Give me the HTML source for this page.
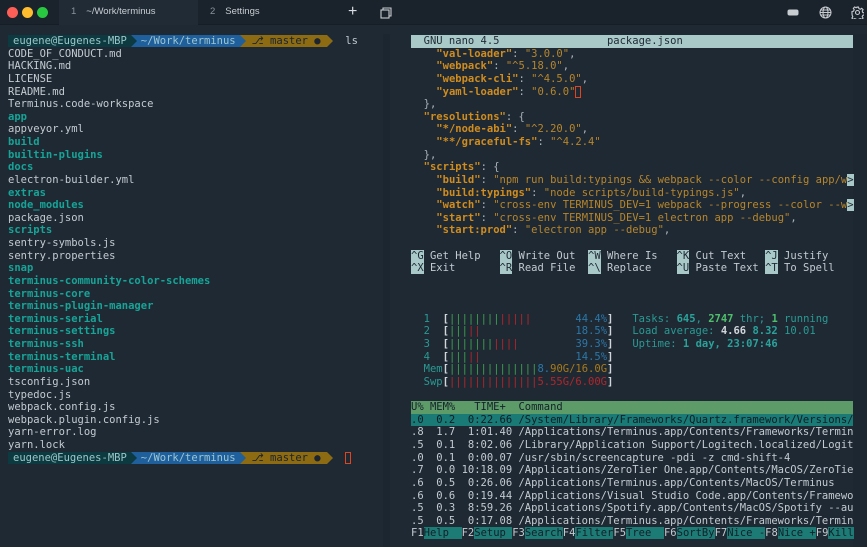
<!DOCTYPE html>
<html><head><meta charset="utf-8"><style>
*{margin:0;padding:0;box-sizing:border-box}
body{width:867px;height:547px;overflow:hidden;background:#1f2934;font-family:"DejaVu Sans Mono","Liberation Mono",monospace;font-size:10.5px;color:#c3cbd0;position:relative}
#tabs{position:absolute;left:0;top:0;width:867px;height:25px;background:#1a222b;border-bottom:1px solid #161d24;font-family:"Liberation Sans",sans-serif;font-size:9.5px}
.dot{position:absolute;top:7px;width:11px;height:11px;border-radius:50%}
.tab{position:absolute;top:0;height:25px;line-height:24px;color:#c8cdd2}
.tab b{font-weight:normal;color:#8a939c;margin-right:10px}
.pane{position:absolute;top:35px}
.l{height:12.63px;line-height:12.63px;white-space:pre}
.d{color:#17a497;font-weight:bold}
.k{color:#d08d1e;font-weight:bold}
.v{color:#b7862a}
.g{color:#aab2b8}
.seg{display:inline-block;height:12px;line-height:12px;vertical-align:top;position:relative}
.cur{display:inline-block;width:6px;height:12px;border:1px solid #e0451f;vertical-align:top}
.kb{background:#a9c9c9;color:#1f2934}
.t{color:#2a9a92}.tb{color:#2aa29a;font-weight:bold}.gb{color:#4fbf6c;font-weight:bold}.w{color:#d0d6da;font-weight:bold}
.gr{color:#3f9f50}.rd{color:#b3262a}.bl{color:#2b78a8}.yl{color:#a87a1a}
.fk{background:#1d7b76;color:#12202a}
.ar{display:inline-block;width:0;height:0;border-top:6px solid transparent;border-bottom:6px solid transparent;vertical-align:top}
</style></head><body>
<div id="tabs">
<div class="dot" style="left:7px;background:#fd5f57"></div>
<div class="dot" style="left:22px;background:#febc2e"></div>
<div class="dot" style="left:37px;background:#28c840"></div>
<div class="tab" style="left:59px;width:139px;background:#212b35;height:25px;padding-left:12px"><b>1</b>~/Work/terminus</div>
<div class="tab" style="left:210px"><b>2</b>Settings</div>
<div class="tab" style="left:348px;font-size:16px;color:#d8dde2">+</div>
<svg style="position:absolute;left:380px;top:6px" width="13" height="13" viewBox="0 0 13 13" fill="none" stroke="#c8cdd2" stroke-width="1.1"><rect x="1" y="4" width="8" height="8"/><path d="M3 4V2h8v8H9"/></svg>
<svg style="position:absolute;left:787px;top:9px" width="12" height="7"><rect x="0.5" y="0.5" width="11" height="6" rx="2" fill="#c8cdd2"/></svg>
<svg style="position:absolute;left:819px;top:6px" width="13" height="13" viewBox="0 0 13 13" fill="none" stroke="#c8cdd2" stroke-width="1"><circle cx="6.5" cy="6.5" r="5.5"/><ellipse cx="6.5" cy="6.5" rx="2.5" ry="5.5"/><path d="M1 6.5h11M2 4h9M2 9h9"/></svg>
<svg style="position:absolute;left:851px;top:6px" width="13" height="13" viewBox="0 0 13 13" fill="none" stroke="#c8cdd2" stroke-width="1.1"><circle cx="6.5" cy="6.5" r="2"/><path d="M5.5 1h2l.4 1.6 1.4.6 1.4-.9 1.4 1.4-.9 1.4.6 1.4 1.6.4v2l-1.6.4-.6 1.4.9 1.4-1.4 1.4-1.4-.9-1.4.6-.4 1.6h-2l-.4-1.6-1.4-.6-1.4.9-1.4-1.4.9-1.4-.6-1.4L1 7.5v-2l1.6-.4.6-1.4-.9-1.4 1.4-1.4 1.4.9 1.4-.6z"/></svg>
</div>
<div style="position:absolute;left:383px;top:34px;width:7px;height:513px;background:#1c2630"></div>
<div style="position:absolute;left:853px;top:34px;width:14px;height:513px;background:#1d2732"></div>

<div class="pane" style="left:8px">
<div class="l"><span class="seg" style="background:#0c3a40;color:#9cc6c8;padding:0 4px 0 5px">eugene@Eugenes-MBP</span><span class="ar" style="border-left:6px solid #0c3a40;background:#1f5f9c"></span><span class="seg" style="background:#1f5f9c;color:#9cc6d0;padding:0 4px 0 4px">~/Work/terminus</span><span class="ar" style="border-left:6px solid #1f5f9c;background:#8c6b12"></span><span class="seg" style="background:#8c6b12;color:#1b2430;padding:0 6px 0 6px">⎇ master ●</span><span class="ar" style="border-left:6px solid #8c6b12"></span>  ls</div>
<div class="l">CODE_OF_CONDUCT.md</div>
<div class="l">HACKING.md</div>
<div class="l">LICENSE</div>
<div class="l">README.md</div>
<div class="l">Terminus.code-workspace</div>
<div class="l d">app</div>
<div class="l">appveyor.yml</div>
<div class="l d">build</div>
<div class="l d">builtin-plugins</div>
<div class="l d">docs</div>
<div class="l">electron-builder.yml</div>
<div class="l d">extras</div>
<div class="l d">node_modules</div>
<div class="l">package.json</div>
<div class="l d">scripts</div>
<div class="l">sentry-symbols.js</div>
<div class="l">sentry.properties</div>
<div class="l d">snap</div>
<div class="l d">terminus-community-color-schemes</div>
<div class="l d">terminus-core</div>
<div class="l d">terminus-plugin-manager</div>
<div class="l d">terminus-serial</div>
<div class="l d">terminus-settings</div>
<div class="l d">terminus-ssh</div>
<div class="l d">terminus-terminal</div>
<div class="l d">terminus-uac</div>
<div class="l">tsconfig.json</div>
<div class="l">typedoc.js</div>
<div class="l">webpack.config.js</div>
<div class="l">webpack.plugin.config.js</div>
<div class="l">yarn-error.log</div>
<div class="l">yarn.lock</div>
<div class="l"><span class="seg" style="background:#0c3a40;color:#9cc6c8;padding:0 4px 0 5px">eugene@Eugenes-MBP</span><span class="ar" style="border-left:6px solid #0c3a40;background:#1f5f9c"></span><span class="seg" style="background:#1f5f9c;color:#9cc6d0;padding:0 4px 0 4px">~/Work/terminus</span><span class="ar" style="border-left:6px solid #1f5f9c;background:#8c6b12"></span><span class="seg" style="background:#8c6b12;color:#1b2430;padding:0 6px 0 6px">⎇ master ●</span><span class="ar" style="border-left:6px solid #8c6b12"></span>  <span class="cur"></span></div>
</div>

<div class="pane" style="left:411px;width:442px">
<div class="l kb">  GNU nano 4.5                 package.json</div>
<div class="l">    <span class="k">"val-loader"</span><span class="g">: </span><span class="v">"3.0.0"</span><span class="g">,</span></div>
<div class="l">    <span class="k">"webpack"</span><span class="g">: </span><span class="v">"^5.18.0"</span><span class="g">,</span></div>
<div class="l">    <span class="k">"webpack-cli"</span><span class="g">: </span><span class="v">"^4.5.0"</span><span class="g">,</span></div>
<div class="l">    <span class="k">"yaml-loader"</span><span class="g">: </span><span class="v">"0.6.0"</span><span class="cur"></span></div>
<div class="l g">  },</div>
<div class="l">  <span class="k">"resolutions"</span><span class="g">: {</span></div>
<div class="l">    <span class="k">"*/node-abi"</span><span class="g">: </span><span class="v">"^2.20.0"</span><span class="g">,</span></div>
<div class="l">    <span class="k">"**/graceful-fs"</span><span class="g">: </span><span class="v">"^4.2.4"</span></div>
<div class="l g">  },</div>
<div class="l">  <span class="k">"scripts"</span><span class="g">: {</span></div>
<div class="l">    <span class="k">"build"</span><span class="g">: </span><span class="v">"npm run build:typings &amp;&amp; webpack --color --config app/w</span><span class="kb">&gt;</span></div>
<div class="l">    <span class="k">"build:typings"</span><span class="g">: </span><span class="v">"node scripts/build-typings.js"</span><span class="g">,</span></div>
<div class="l">    <span class="k">"watch"</span><span class="g">: </span><span class="v">"cross-env TERMINUS_DEV=1 webpack --progress --color --w</span><span class="kb">&gt;</span></div>
<div class="l">    <span class="k">"start"</span><span class="g">: </span><span class="v">"cross-env TERMINUS_DEV=1 electron app --debug"</span><span class="g">,</span></div>
<div class="l">    <span class="k">"start:prod"</span><span class="g">: </span><span class="v">"electron app --debug"</span><span class="g">,</span></div>
<div class="l"> </div>
<div class="l"><span class="kb">^G</span> Get Help   <span class="kb">^O</span> Write Out  <span class="kb">^W</span> Where Is   <span class="kb">^K</span> Cut Text   <span class="kb">^J</span> Justify</div>
<div class="l"><span class="kb">^X</span> Exit       <span class="kb">^R</span> Read File  <span class="kb">^\</span> Replace    <span class="kb">^U</span> Paste Text <span class="kb">^T</span> To Spell</div>
<div class="l"> </div><div class="l"> </div><div class="l"> </div>
<div class="l">  <span class="t">1</span>  <span class="w">[</span><span class="gr">||||||||</span><span class="rd">|||||</span>       <span class="bl">44.4%</span><span class="w">]</span>   <span class="t">Tasks: </span><span class="tb">645</span><span class="t">, </span><span class="gb">2747</span><span class="t"> thr; </span><span class="gb">1</span><span class="t"> running</span></div>
<div class="l">  <span class="t">2</span>  <span class="w">[</span><span class="gr">|||</span><span class="rd">||</span>               <span class="bl">18.5%</span><span class="w">]</span>   <span class="t">Load average: </span><span class="w">4.66 </span><span class="tb">8.32 </span><span class="t">10.01</span></div>
<div class="l">  <span class="t">3</span>  <span class="w">[</span><span class="gr">|||||||</span><span class="rd">||||</span>         <span class="bl">39.3%</span><span class="w">]</span>   <span class="t">Uptime: </span><span class="tb">1 day, 23:07:46</span></div>
<div class="l">  <span class="t">4</span>  <span class="w">[</span><span class="gr">|||</span><span class="rd">||</span>               <span class="bl">14.5%</span><span class="w">]</span></div>
<div class="l">  <span class="t">Mem</span><span class="w">[</span><span class="gr">||||||||||||||</span><span class="bl">8.</span><span class="yl">90G/16.0G</span><span class="w">]</span></div>
<div class="l">  <span class="t">Swp</span><span class="w">[</span><span class="rd">||||||||||||||5.55G/6.00G</span><span class="w">]</span></div>
<div class="l"> </div>
<div class="l" style="background:#5d9c68;color:#14222a">U% MEM%   TIME+  Command                                            </div>
<div class="l" style="background:#1a7a76;color:#0f1d26">.0  0.2  0:22.66 /System/Library/Frameworks/Quartz.framework/Versions/</div>
<div class="l">.8  1.7  1:01.40 /Applications/Terminus.app/Contents/Frameworks/Termin</div>
<div class="l">.5  0.1  8:02.06 /Library/Application Support/Logitech.localized/Logit</div>
<div class="l">.0  0.1  0:00.07 /usr/sbin/screencapture -pdi -z cmd-shift-4</div>
<div class="l">.7  0.0 10:18.09 /Applications/ZeroTier One.app/Contents/MacOS/ZeroTie</div>
<div class="l">.6  0.5  0:26.06 /Applications/Terminus.app/Contents/MacOS/Terminus</div>
<div class="l">.6  0.6  0:19.44 /Applications/Visual Studio Code.app/Contents/Framewo</div>
<div class="l">.5  0.3  8:59.26 /Applications/Spotify.app/Contents/MacOS/Spotify --au</div>
<div class="l">.5  0.5  0:17.08 /Applications/Terminus.app/Contents/Frameworks/Termin</div>
<div class="l">F1<span class="fk">Help  </span>F2<span class="fk">Setup </span>F3<span class="fk">Search</span>F4<span class="fk">Filter</span>F5<span class="fk">Tree  </span>F6<span class="fk">SortBy</span>F7<span class="fk">Nice -</span>F8<span class="fk">Nice +</span>F9<span class="fk">Kill</span></div>
</div>
</body></html>
